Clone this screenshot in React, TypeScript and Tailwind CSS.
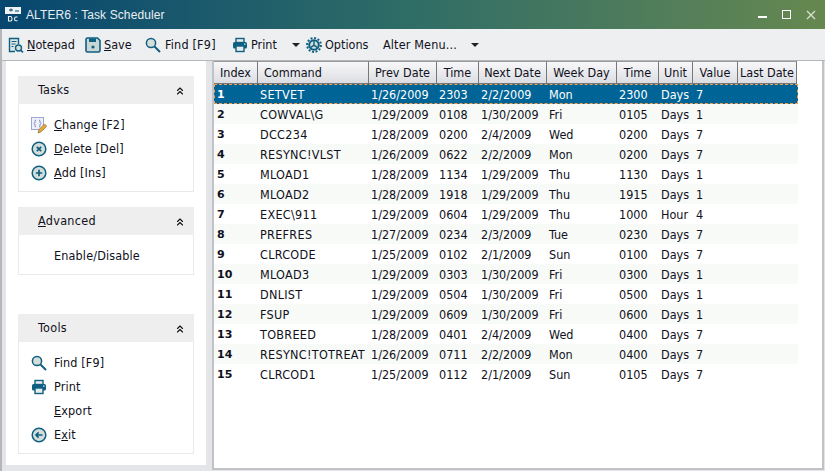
import React from 'react';
import { ChevronsUp } from 'lucide-react';

const teal = '#0f5f82';

const columns = [
  { label: 'Index', w: 'w-[44px]' },
  { label: 'Command', w: 'w-[111px]', left: true },
  { label: 'Prev Date', w: 'w-[68px]' },
  { label: 'Time', w: 'w-[42px]' },
  { label: 'Next Date', w: 'w-[68px]' },
  { label: 'Week Day', w: 'w-[70px]' },
  { label: 'Time', w: 'w-[42px]' },
  { label: 'Unit', w: 'w-[34px]' },
  { label: 'Value', w: 'w-[45px]' },
  { label: 'Last Date', w: 'w-[59px]' },
];

const rows = [
  ['SETVET', '1/26/2009', '2303', '2/2/2009', 'Mon', '2300', 'Days', '7'],
  ['COWVAL\\G', '1/29/2009', '0108', '1/30/2009', 'Fri', '0105', 'Days', '1'],
  ['DCC234', '1/28/2009', '0200', '2/4/2009', 'Wed', '0200', 'Days', '7'],
  ['RESYNC!VLST', '1/26/2009', '0622', '2/2/2009', 'Mon', '0200', 'Days', '7'],
  ['MLOAD1', '1/28/2009', '1134', '1/29/2009', 'Thu', '1130', 'Days', '1'],
  ['MLOAD2', '1/28/2009', '1918', '1/29/2009', 'Thu', '1915', 'Days', '1'],
  ['EXEC\\911', '1/29/2009', '0604', '1/29/2009', 'Thu', '1000', 'Hour', '4'],
  ['PREFRES', '1/27/2009', '0234', '2/3/2009', 'Tue', '0230', 'Days', '7'],
  ['CLRCODE', '1/25/2009', '0102', '2/1/2009', 'Sun', '0100', 'Days', '7'],
  ['MLOAD3', '1/29/2009', '0303', '1/30/2009', 'Fri', '0300', 'Days', '1'],
  ['DNLIST', '1/29/2009', '0504', '1/30/2009', 'Fri', '0500', 'Days', '1'],
  ['FSUP', '1/29/2009', '0609', '1/30/2009', 'Fri', '0600', 'Days', '1'],
  ['TOBREED', '1/28/2009', '0401', '2/4/2009', 'Wed', '0400', 'Days', '7'],
  ['RESYNC!TOTREAT', '1/26/2009', '0711', '2/2/2009', 'Mon', '0400', 'Days', '7'],
  ['CLRCOD1', '1/25/2009', '0112', '2/1/2009', 'Sun', '0105', 'Days', '7'],
];

const CircleIcon = ({ children }: { children: React.ReactNode }) => (
  <svg width="16" height="16" viewBox="0 0 16 16">
    <circle cx="8" cy="8" r="6.8" fill="#d5ded8" stroke={teal} strokeWidth="1.5" />
    {children}
  </svg>
);

const SearchIcon = () => (
  <svg width="16" height="16" viewBox="0 0 16 16">
    <circle cx="6" cy="6" r="4.6" fill="#d5ded8" stroke={teal} strokeWidth="1.5" />
    <path d="M9.500 9.500 15 15" stroke={teal} strokeWidth="2" />
  </svg>
);

const PrintIcon = () => (
  <svg width="16" height="16" viewBox="0 0 16 16">
    <rect x="4" y="1.500" width="8" height="4" fill="#e6ecea" stroke={teal} strokeWidth="1.400" />
    <rect x="1" y="5" width="14" height="6.500" rx="1.500" fill={teal} />
    <rect x="4" y="9" width="8" height="5.500" fill="#e6ecea" stroke={teal} strokeWidth="1.400" />
    <rect x="12" y="6.500" width="1.500" height="1.200" fill="#e6ecea" />
  </svg>
);

const SaveIcon = () => (
  <svg width="16" height="16" viewBox="0 0 16 16">
    <path d="M2.500 1h10l2.500 2.500V13.500a1.500 1.500 0 0 1-1.500 1.500h-11A1.500 1.500 0 0 1 1 13.500V2.500A1.500 1.500 0 0 1 2.500 1z" fill="#c9d6d4" stroke={teal} strokeWidth="1.600" />
    <rect x="4" y="1.500" width="7" height="3.500" fill={teal} />
    <circle cx="8" cy="10" r="1.600" fill={teal} />
  </svg>
);

const NotepadIcon = () => (
  <svg width="16" height="16" viewBox="0 0 16 16">
    <path d="M7 14.500H1.500v-13h9V7" fill="#dfe6e4" stroke={teal} strokeWidth="1.400" />
    <path d="M3.500 4.500h5M3.500 7h4M3.500 9.500h2" stroke={teal} strokeWidth="1" />
    <circle cx="10.500" cy="11" r="3" fill="#d5ded8" stroke={teal} strokeWidth="1.400" />
    <path d="m12.800 13.300 2.200 2" stroke={teal} strokeWidth="1.600" />
  </svg>
);

const GearIcon = () => (
  <svg width="16" height="16" viewBox="0 0 16 16">
    <circle cx="8" cy="8" r="6.900" fill="none" stroke={teal} strokeWidth="2" strokeDasharray="2 1.600" />
    <circle cx="8" cy="8" r="4.800" fill="#d5ded8" stroke={teal} strokeWidth="2" />
    <path d="M8 3.500v4.700l-3.500 2.400M8 8.200l3.500 2.400" stroke={teal} strokeWidth="1.400" fill="none" />
  </svg>
);

const ChangeIcon = () => (
  <svg width="17" height="17" viewBox="0 0 17 17">
    <rect x="0.500" y="0.500" width="12" height="12" fill="#eef1fa" stroke="#9aa6d8" />
    <path d="M5 3q-1 0-1 1.500t-1 2q1 .5 1 2t1 1.500M8 3q1 0 1 1.500t1 2q-1 .5-1 2t-1 1.500" fill="none" stroke="#5566aa" strokeWidth=".8" />
    <path d="M7 16l1-3.500 5.500-5.500 2.200 2.200-5.500 5.500z" fill="#e8a93c" stroke="#8a6a30" strokeWidth=".7" />
  </svg>
);

const DeleteIcon = () => (
  <CircleIcon>
    <path d="m5.800 5.800 4.400 4.400m0-4.400-4.400 4.400" stroke={teal} strokeWidth="1.700" />
  </CircleIcon>
);

const AddIcon = () => (
  <CircleIcon>
    <path d="M8 4.800v6.400M4.800 8h6.400" stroke={teal} strokeWidth="1.700" />
  </CircleIcon>
);

const ExitIcon = () => (
  <CircleIcon>
    <path d="M11.500 8H5M7.600 5.400 5 8l2.600 2.600" stroke={teal} strokeWidth="1.600" fill="none" />
  </CircleIcon>
);

const Caret = () => (
  <span className="inline-block h-0 w-0 border-x-[4px] border-t-[4px] border-x-transparent border-t-[#222]" />
);

const Key = ({ children }: { children: React.ReactNode }) => <span className="underline">{children}</span>;

const TaskItem = ({ icon, children }: { icon?: React.ReactNode; children: React.ReactNode }) => (
  <div className="flex h-[24px] items-center">
    <span className="ml-[12px] flex w-[23px] shrink-0 items-center">{icon}</span>
    <span className="tracking-[0.15px]">{children}</span>
  </div>
);

const TaskBox = ({ title, body, className }: { title: React.ReactNode; body: React.ReactNode; className: string }) => (
  <div className={`border-x border-b border-[#e9e9e9] ${className}`}>
    <div className="-mx-px flex h-[28px] items-center justify-between bg-[#eeeeee] pl-[20px] pr-[8px] pt-px">
      <span className="tracking-[0.3px]">{title}</span>
      <ChevronsUp size={12} strokeWidth={2.2} color="#111" />
    </div>
    {body}
  </div>
);

const ToolButton = ({ icon, children, className }: { icon?: React.ReactNode; children: React.ReactNode; className: string }) => (
  <div className={`flex items-center ${className}`}>
    {icon}
    <span className="ml-[3px] pt-px">{children}</span>
  </div>
);

export default function App() {
  return (
    <div className="flex h-[471px] w-[825px] flex-col overflow-hidden bg-[#e4e5e8] text-[12.5px] text-[#101020] [font-family:'DejaVu_Sans_Condensed','Noto_Sans',sans-serif]">
      <div className="flex h-[29px] shrink-0 items-center bg-gradient-to-r from-[#06466f] via-[#2f6d66] to-[#66884f] text-[12px] text-[#e8eef2] [font-family:'Liberation_Sans',sans-serif]">
        <svg width="18" height="18" viewBox="0 0 18 18" className="ml-[5px]">
          <rect x="0" y="1" width="16" height="7" fill="#eef2f4" />
          <path d="M4 4h4M6 2.500v3M10 5h4" stroke="#06466f" strokeWidth="1" />
          <path d="M3.500 10.500h2.200q1.300 0 1.300 2.200t-1.300 2.300H3.500zM12.500 11h-1.500q-1.500 0-1.500 1.900t1.500 1.900h1.500" fill="none" stroke="#eef2f4" strokeWidth="1.100" />
        </svg>
        <span className="ml-[3px] flex-1 tracking-[0.1px]">ALTER6 : Task Scheduler</span>
        <span className="mr-[15px] h-[2px] w-[9px] translate-y-[2px] bg-white" />
        <span className="mr-[15px] h-[9px] w-[9px] border border-white" />
        <svg width="10" height="10" viewBox="0 0 10 10" className="mr-[9px]">
          <path d="m1 1 8 8m0-8-8 8" stroke="#d8e0d0" strokeWidth="1.300" />
        </svg>
      </div>

      <div className="flex h-[32px] shrink-0 items-center border-b border-l-2 border-[#b4b6b9] bg-[#eeeff1] pl-[6px]">
        <ToolButton icon={<NotepadIcon />} className="w-[77px]"><Key>N</Key>otepad</ToolButton>
        <ToolButton icon={<SaveIcon />} className="w-[60px]"><Key>S</Key>ave</ToolButton>
        <ToolButton icon={<SearchIcon />} className="w-[87px] tracking-[0.2px]"><span className="ml-px">Find [F9]</span></ToolButton>
        <ToolButton icon={<PrintIcon />} className="w-[60px]">Print</ToolButton>
        <Caret />
        <ToolButton icon={<GearIcon />} className="ml-[6px] w-[77px]">Options</ToolButton>
        <span className="w-[88px] pt-px tracking-[0.15px]">Alter Menu...</span>
        <Caret />
      </div>

      <div className="flex min-h-0 flex-1 border-l-2 border-[#b4b6b9]">
        <div className="mb-[6px] ml-[4px] w-[200px] shrink-0 bg-white pl-[12px] pr-[12px] pt-[15px]">
          <TaskBox
            title="Tasks"
            className="h-[116px]"
            body={
              <div className="pt-[9px]">
                <TaskItem icon={<ChangeIcon />}><Key>C</Key>hange [F2]</TaskItem>
                <TaskItem icon={<DeleteIcon />}><Key>D</Key>elete [Del]</TaskItem>
                <TaskItem icon={<AddIcon />}><Key>A</Key>dd [Ins]</TaskItem>
              </div>
            }
          />
          <TaskBox
            title={<><Key>A</Key>dvanced</>}
            className="mt-[15px] h-[68px]"
            body={
              <div className="pt-[9px]">
                <TaskItem>Enable/Disable</TaskItem>
              </div>
            }
          />
          <TaskBox
            title="Tools"
            className="mt-[39px] h-[140px]"
            body={
              <div className="pt-[9px]">
                <TaskItem icon={<SearchIcon />}>Find [F9]</TaskItem>
                <TaskItem icon={<PrintIcon />}>Print</TaskItem>
                <TaskItem><Key>E</Key>xport</TaskItem>
                <TaskItem icon={<ExitIcon />}>E<Key>x</Key>it</TaskItem>
              </div>
            }
          />
        </div>

        <div className="mb-[1px] ml-[6px] mr-[1px] flex-1 border-b-2 border-l-2 border-r-2 border-[#c0c2c6] bg-white">
          <div className="flex h-[23px]">
            {columns.map((c, i) => (
              <div
                key={i}
                className={`${c.w} flex shrink-0 items-center border-b border-r border-t border-[#777] border-t-[#999] bg-gradient-to-b from-[#f8f8fa] to-[#dcdde2] pt-[2px] ${c.left ? 'justify-start pl-[6px]' : 'justify-center'} ${i === 0 ? 'border-l-0' : ''}`}
              >
                {c.label}
              </div>
            ))}
          </div>
          {rows.map((r, i) => (
            <div
              key={i}
              className={`flex h-[20px] w-[584px] items-center pt-[3px] ${
                i === 0
                  ? 'bg-[#006496] text-white outline-1 -outline-offset-1 outline-dashed outline-[#f0a050]'
                  : i % 2 === 1
                    ? 'bg-[#f7faf7]'
                    : ''
              }`}
            >
              <span className="w-[46px] shrink-0 pl-[3px] text-[11px] font-bold [font-family:'DejaVu_Sans',sans-serif]">{i + 1}</span>
              <span className="w-[111px] shrink-0 tracking-[0.3px]">{r[0]}</span>
              <span className="w-[68px] shrink-0">{r[1]}</span>
              <span className="w-[42px] shrink-0">{r[2]}</span>
              <span className="w-[68px] shrink-0">{r[3]}</span>
              <span className="w-[70px] shrink-0">{r[4]}</span>
              <span className="w-[42px] shrink-0">{r[5]}</span>
              <span className="w-[35px] shrink-0">{r[6]}</span>
              <span>{r[7]}</span>
            </div>
          ))}
        </div>
      </div>
    </div>
  );
}
